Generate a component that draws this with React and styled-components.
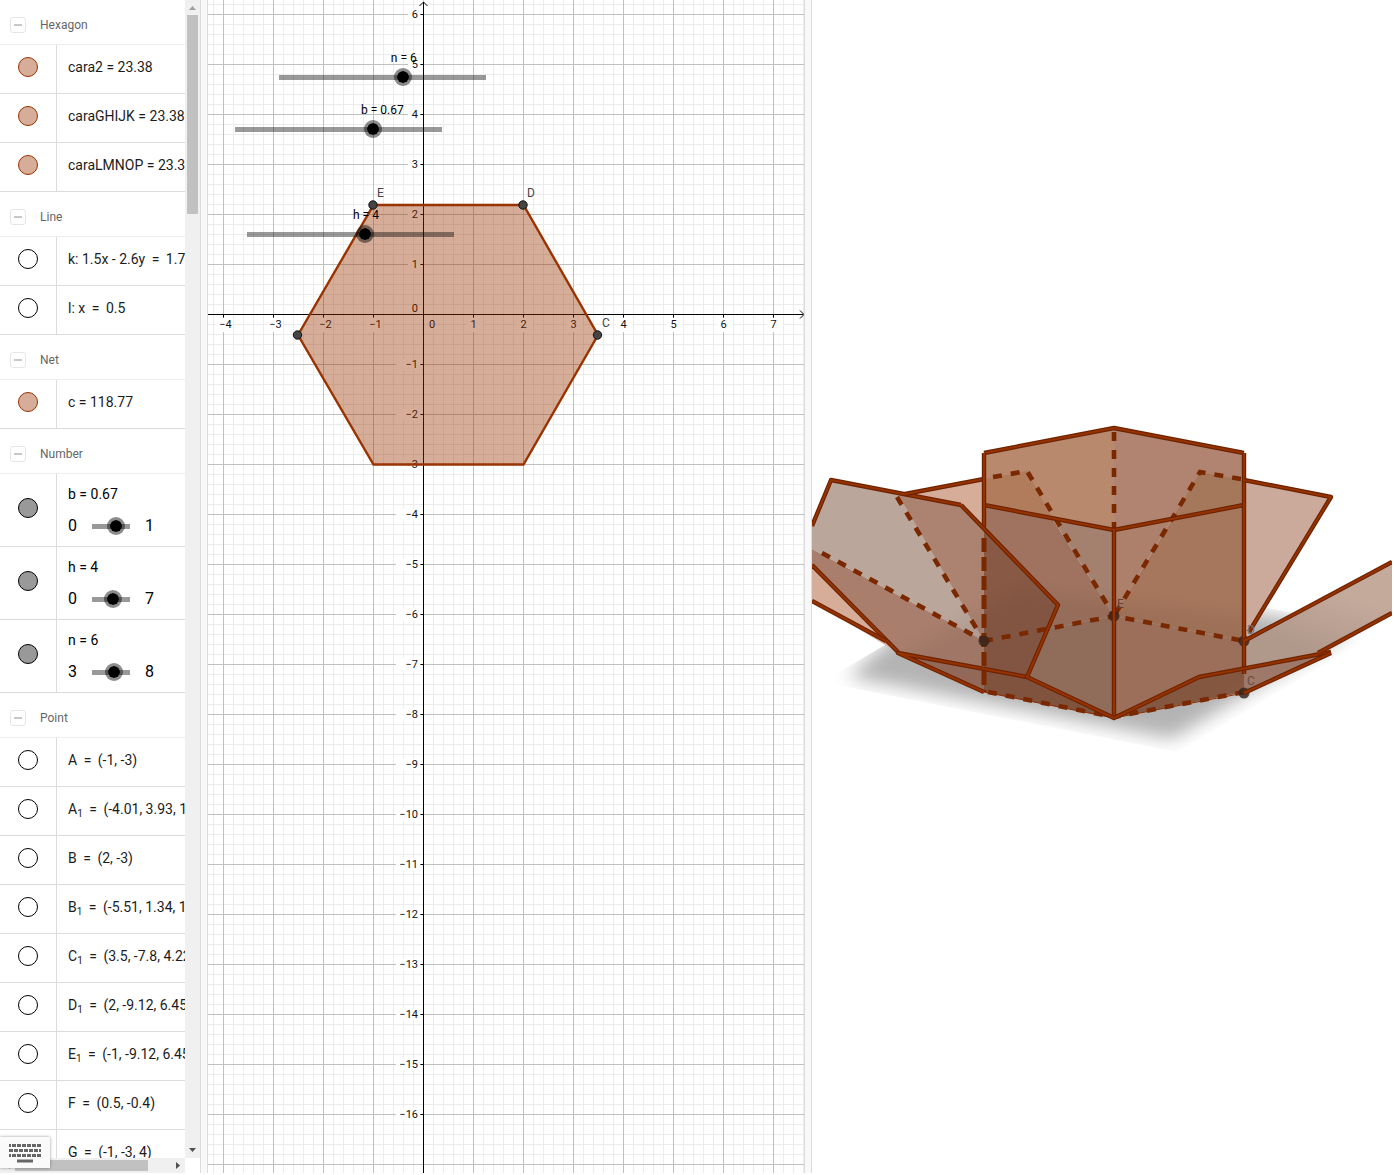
import { useState } from "react";
import styled, { createGlobalStyle } from "styled-components";

const GlobalStyle = createGlobalStyle`
   * {
      box-sizing: border-box;
   }

   body {
      margin: 0;
      background: #fff;
      font-family: Roboto, sans-serif;
      overflow: hidden;
   }

   button {
      padding: 0;
      border: none;
      background: none;
      cursor: pointer;
   }
`;

const Wrapper = styled.main`
   display: flex;
   height: 100vh;
   padding: 0 2px 2px 0;
`;

const Sidebar = styled.aside`
   position: relative;
   flex: none;
   display: grid;
   grid-template: minmax(0, 1fr) 15px / 185px 15px;
`;

const List = styled.div`
   overflow: hidden;
`;

const Splitter = styled.div`
   flex: none;
   width: 8px;
   background: #f8f8f8;
   border-left: 1px solid #dcdcdc;
   border-right: 1px solid #dcdcdc;
`;

const GroupTitle = styled.h2`
   display: flex;
   align-items: center;
   gap: 14px;
   height: 45px;
   margin: 0;
   padding: 5px 0 0 10px;
   border-bottom: 1px solid #eee;
   font-size: 12px;
   font-weight: 400;
   color: #666;
`;

const Toggle = styled.button`
   display: flex;
   align-items: center;
   justify-content: center;
   width: 16px;
   height: 16px;
   border: 1px solid #e6e6e6;
   border-radius: 3px;

   &::before {
      content: "";
      width: 8px;
      height: 2px;
      background: #c8c8c8;
   }
`;

const Items = styled.ul`
   margin: 0;
   padding: 0;
   list-style: none;
`;

const Item = styled.li`
   display: flex;
   height: ${({ $tall }) => ($tall ? "73px" : "49px")};
   border-bottom: 1px solid #dcdcdc;
`;

const MarbleCell = styled.div`
   flex: none;
   display: flex;
   justify-content: center;
   align-items: center;
   width: 57px;
   padding-bottom: 4px;
   border-right: 1px solid #dcdcdc;
`;

const Marble = styled.button`
   width: 20px;
   height: 20px;
   border: 1px solid ${({ $kind }) => ($kind === "face" ? "#993300" : "#000")};
   border-radius: 50%;
   background: ${({ $kind }) => ({ face: "#d6ad99", number: "#999" })[$kind] || "#fff"};
`;

const Value = styled.div`
   padding: 12px 0 0 11px;
   font-size: 14px;
   line-height: 20px;
   white-space: nowrap;
   color: #1c1c1c;

   & sub {
      font-size: 10px;
      line-height: 0;
      vertical-align: -3px;
   }
`;

const Equals = styled.span`
   margin: 0 ${({ $loose }) => ($loose ? "3px" : "0")};
`;

const NumberValue = styled.div`
   padding: 10px 0 0 11px;
   font-size: 14px;
   line-height: 20px;
   color: #000;
`;

const NumberSlider = styled.div`
   display: flex;
   align-items: center;
   height: 24px;
   margin-top: 10px;
   font-size: 16px;
`;

const Limit = styled.span`
   width: ${({ $min }) => ($min ? "19px" : "auto")};
   padding-left: ${({ $min }) => ($min ? "0" : "10px")};
`;

const Range = styled.input`
   appearance: none;
   width: ${({ $wide }) => ($wide ? "221px" : "48px")};
   height: 18px;
   margin: 0;
   background: linear-gradient(rgba(0, 0, 0, 0.4), rgba(0, 0, 0, 0.4)) no-repeat 50% 50% / calc(100% - ${({ $wide }) => ($wide ? "14px" : "10px")}) 5px;
   cursor: pointer;

   &::-webkit-slider-thumb {
      appearance: none;
      width: 18px;
      height: 18px;
      border: 3px solid rgba(0, 0, 0, 0.45);
      border-radius: 50%;
      background: #000;
      background-clip: padding-box;
   }
`;

const ScrollColumn = styled.div`
   display: flex;
   flex-direction: column;
   background: #f0f0f0;
`;

const ScrollRow = styled.div`
   display: flex;
   background: #f0f0f0;
`;

const ScrollButton = styled.button`
   flex: none;
   width: 15px;
   height: 15px;

   & > svg {
      display: block;
   }
`;

const Track = styled.div`
   flex: 1;
   display: flex;
   flex-direction: ${({ $vertical }) => ($vertical ? "column" : "row")};
   padding: ${({ $vertical }) => ($vertical ? "0 2px" : "2px 0")};
`;

const Thumb = styled.div`
   flex: 0 0 ${({ $size }) => $size};
   background: #c1c1c1;
`;

const KeyboardButton = styled.button`
   position: absolute;
   left: 0;
   bottom: 5px;
   display: flex;
   justify-content: center;
   align-items: center;
   width: 50px;
   height: 31px;
   background: #fafafa;
   box-shadow: 0 0 3px rgba(0, 0, 0, 0.4);
`;

const View = styled.section`
   position: relative;
   flex: ${({ $share }) => $share} 1 0;
   min-width: 0;
   overflow: hidden;
   background: #fff;
`;

const Layer = styled.svg`
   position: absolute;
   inset: 0;
   width: 100%;
   height: 100%;
   pointer-events: none;
   font-family: Roboto, sans-serif;
`;

const Scene = styled.svg`
   display: block;
   width: 100%;
   height: 100%;
   font-family: Roboto, sans-serif;
`;

const CanvasSlider = styled.div`
   position: absolute;
   left: ${({ $x }) => $x}px;
   top: ${({ $y }) => $y}px;
   display: flex;
   flex-direction: column;
   font-size: 12px;
   line-height: 14px;
`;

const CanvasLabel = styled.label`
   margin-bottom: 3px;
   white-space: nowrap;
`;

const GROUPS = [
   { title: "Hexagon", kind: "face", items: [["cara2", "23.38"], ["caraGHIJK", "23.38"], ["caraLMNOP", "23.38"]] },
   { title: "Line", kind: "line", items: [["k: 1.5x - 2.6y", "1.79"], ["l: x", "0.5"]] },
   { title: "Net", kind: "face", items: [["c", "118.77"]] },
   { title: "Number", kind: "number", items: ["b", "h", "n"] },
   {
      title: "Point",
      kind: "point",
      items: [
         ["A", "(-1, -3)"],
         ["A", "(-4.01, 3.93, 1.68)", 1],
         ["B", "(2, -3)"],
         ["B", "(-5.51, 1.34, 1.68)", 1],
         ["C", "(3.5, -7.8, 4.22)", 1],
         ["D", "(2, -9.12, 6.45)", 1],
         ["E", "(-1, -9.12, 6.45)", 1],
         ["F", "(0.5, -0.4)"],
         ["G", "(-1, -3, 4)"],
      ],
   },
];

const LIMITS = {
   n: { min: 3, max: 8, step: 1 },
   b: { min: 0, max: 1, step: 0.01 },
   h: { min: 0, max: 7, step: 0.1 },
};

const CANVAS_SLIDERS = [
   { name: "n", x: 64, y: 51 },
   { name: "b", x: 20, y: 103 },
   { name: "h", x: 32, y: 208 },
];

// graph origin inside the view and pixels per unit
const OX = 215.5;
const OY = 314.5;
const UNIT = 50;

const px = (x) => OX + x * UNIT;
const py = (y) => OY - y * UNIT;
const minus = (v) => String(v).replace("-", "−");

const HEXAGON = [[-1, 2.19], [2, 2.19], [3.49, -0.41], [2, -3], [-1, -3], [-2.51, -0.41]];
const X_TICKS = [-4, -3, -2, -1, 1, 2, 3, 4, 5, 6, 7];
const Y_TICKS = Array.from({ length: 22 }, (_, i) => 6 - i - (i > 5 ? 1 : 0));

const Arrow = ({ d, fill = "#505050" }) => (
   <svg width="15" height="15" viewBox="0 0 15 15"><path d={d} fill={fill}/></svg>
);

const Grid = () => (
   <Layer aria-hidden="true">
      <defs>
         <pattern id="minor" x="5" y="4" width="10" height="10" patternUnits="userSpaceOnUse">
            <path d="M.5 0V10M0 .5H10" stroke="#ececec"/>
         </pattern>
         <pattern id="major" x="15" y="14" width="50" height="50" patternUnits="userSpaceOnUse">
            <path d="M.5 0V50M0 .5H50" stroke="#c0c0c0"/>
         </pattern>
      </defs>
      <rect width="100%" height="100%" fill="url(#minor)"/>
      <rect width="100%" height="100%" fill="url(#major)"/>
      {X_TICKS.map((x) => (
         <rect key={x} x={px(x) - 7} y="318" width="16" height="14" fill="#fff"/>
      ))}
      {Y_TICKS.map((y) => {
         const width = y > 0 ? 12 : 24;
         return <rect key={y} x={212 - width} y={py(y) - 6} width={width} height="12" fill="#fff"/>;
      })}
      <path d={`M0 ${OY}H595M${OX} 1175V2`} stroke="#000"/>
      <path d="M592 310.500l4 4-4 4M211.500 6l4-4 4 4" stroke="#000" fill="none"/>
      {X_TICKS.map((x) => <path key={x} d={`M${px(x)} ${OY}v3`} stroke="#000"/>)}
      {Y_TICKS.map((y) => <path key={y} d={`M${OX} ${py(y)}h-3`} stroke="#000"/>)}
      <g fontSize="11" fill="#111">
         {X_TICKS.map((x) => (
            <text key={x} x={px(x) + (x < 0 ? 2 : 0)} y="328" textAnchor="middle">{minus(x)}</text>
         ))}
         <text x="224" y="328" textAnchor="middle">0</text>
         <text x="210" y="312" textAnchor="end">0</text>
         {Y_TICKS.map((y) => (
            <text key={y} x="210" y={Math.floor(py(y)) + 4} textAnchor="end">{minus(y)}</text>
         ))}
      </g>
   </Layer>
);

const Polygon = () => (
   <Layer aria-hidden="true">
      <polygon
         points={HEXAGON.map(([x, y]) => `${px(x)},${py(y)}`).join(" ")}
         fill="#993300"
         fillOpacity=".4"
         stroke="#993300"
         strokeWidth="2.400"
      />
      {[0, 1, 2, 5].map((i) => (
         <circle key={i} cx={px(HEXAGON[i][0]) - 0.5} cy={py(HEXAGON[i][1])} r="4.200" fill="#444" stroke="#111"/>
      ))}
      <g fontSize="12" fill="#444">
         <text x="169" y="197">E</text>
         <text x="319" y="197">D</text>
         <text x="394" y="327">C</text>
      </g>
   </Layer>
);

const FACES = [
   // flaps on the left
   ["812,526 831,480 900,493 984,641 812,549", "#bba69b"],
   ["898,494 961,505 984,527 984,641", "#ac8371"],
   ["905,494 984,479 984,527 961,505", "#d6ad99"],
   ["812,549 984,641 984,668 897,653 812,566", "#a97e6c"],
   ["812,566 897,652 812,601", "#d6ad99"],
   ["897,653 984,668 984,692", "#9a6e5d"],
   // inner walls
   ["984,453 1114,428 1114,530 984,505", "#b8896d"],
   ["984,479 1027,471 1052,518 984,505", "#b07c5b"],
   ["1114,428 1244,453 1244,505 1114,530", "#b08470"],
   ["1200,472 1244,480 1244,505 1172,519", "#a6785b"],
   // outer walls
   ["984,505 1052,518 1114,616 984,641", "#9f735f"],
   ["1052,518 1114,530 1114,616", "#a4806e"],
   ["984,641 1114,616 1114,718 984,692", "#98735f"],
   ["984,527 1058,605 1027,676 984,668", "#885a45"],
   ["984,668 1027,676 1114,718 984,692", "#875843"],
   ["1114,530 1172,519 1114,616", "#ad806b"],
   ["1172,519 1244,505 1244,641 1114,616", "#a6765d"],
   ["1114,616 1244,641 1244,692 1114,718", "#a5755f"],
   ["1114,718 1199,677 1244,668 1244,692", "#8c5c45"],
   // flaps on the right
   ["1244,480 1331,497 1249,632 1244,641", "#cbaa9b"],
   ["1244,641 1392,562 1392,613 1318,653 1244,668", "url(#flap)"],
   ["1244,668 1331,653 1244,692", "#9e7868"],
];

const SOLID = [
   "M812 526L831 480L961 505",
   "M905 494L984 479",
   "M812 565L898 652",
   "M812 601L886 641",
   "M984 692L898 653L1027 677",
   "M984 453L1114 428L1244 453",
   "M984 505L1114 530L1244 505",
   "M984 453V527",
   "M1114 530V718",
   "M1244 453V674",
   "M961 505L1058 605L1027 677L1114 718L1199 677L1331 652",
   "M1244 480L1331 497L1249 632",
   "M1244 641L1392 562",
   "M1318 653L1392 613",
   "M1331 653L1244 693",
];

const DASHED = [
   "M822 553L984 641",
   "M897 497L984 641",
   "M993 477L1027 471L1114 616",
   "M1241 479L1200 472L1114 616",
   "M984 641L1114 616L1244 641",
   "M1114 432V530",
   "M988 692L1114 717L1244 692",
];

const VERTICES = [[984, 641], [1114, 616], [1244, 641], [1244, 693]];

const Box = () => (
   <Scene viewBox="812 0 580 1173" preserveAspectRatio="xMidYMid slice" role="img" aria-label="Unfolding prism">
      <defs>
         <filter id="soft" x="-10%" y="-30%" width="120%" height="160%">
            <feGaussianBlur stdDeviation="9"/>
         </filter>
         <clipPath id="ground">
            <polygon points="822,682 890,642 1000,570 1050,566 1382,630 1177,752"/>
         </clipPath>
         <clipPath id="walls">
            <polygon points="860,641 984,570 1040,560 1244,595 1244,692 1114,718 984,692 898,653"/>
         </clipPath>
         <linearGradient id="flap" x1="1330" y1="590" x2="1310" y2="650" gradientUnits="userSpaceOnUse">
            <stop stopColor="#c4aa9b"/>
            <stop offset="1" stopColor="#b0988b"/>
         </linearGradient>
      </defs>
      <g clipPath="url(#ground)">
         <polygon points="848,677 890,640 1020,570 1354,630 1172,739" fill="#b4b4b4" filter="url(#soft)"/>
      </g>
      {FACES.map(([points, fill]) => <polygon key={points} points={points} fill={fill}/>)}
      <g clipPath="url(#walls)" opacity=".05">
         <polygon points="858,678 1020,590 1340,631 1170,736" filter="url(#soft)"/>
      </g>
      <path d="M984 692L1114 718L1244 693" fill="none" stroke="#8b2e00"/>
      <g fill="none" stroke="#7a2800" strokeWidth="4.600" strokeDasharray="9 9">
         {DASHED.map((d) => <path key={d} d={d}/>)}
         <path d="M984 538V692" strokeWidth="5" strokeDasharray="14 5"/>
      </g>
      <g fill="#38261f" fillOpacity=".85">
         {VERTICES.map(([x, y]) => <circle key={`${x}-${y}`} cx={x} cy={y} r="5.500"/>)}
      </g>
      <g fill="none" strokeLinejoin="round">
         {SOLID.map((d) => (
            <g key={d}>
               <path d={d} stroke="#6e2300" strokeWidth="4.400"/>
               <path d={d} stroke="#953200" strokeWidth="2"/>
            </g>
         ))}
      </g>
      <g fontSize="12">
         <text x="1117" y="608" fill="#65402f">E</text>
         <text x="1247" y="634" fill="#777">D</text>
         <text x="1247" y="685" fill="#6b4c40">C</text>
      </g>
   </Scene>
);

const KeyboardIcon = () => (
   <svg width="32" height="20" viewBox="0 0 32 20" fill="none" stroke="#666" strokeWidth="3">
      <path d="M0 2.500H32M0 12.500H32" strokeDasharray="2 1 4 1 4 1 4 1 4 1 4 1 4"/>
      <path d="M0 7.500H32" strokeDasharray="4 1"/>
      <path d="M8 18H24"/>
   </svg>
);

const App = () => {
   const [values, setValues] = useState({ n: 6, b: 0.67, h: 4 });

   const handleChange = (name) => (e) => {
      setValues({ ...values, [name]: Number(e.target.value) });
   }

   const renderItem = (item, kind) => {
      if (kind === "number") {
         const { min, max, step } = LIMITS[item];
         return (
            <Item key={item} $tall>
               <MarbleCell><Marble $kind={kind} aria-label={`Show ${item}`}/></MarbleCell>
               <NumberValue>
                  <label htmlFor={`value-${item}`}>{item} = {values[item]}</label>
                  <NumberSlider>
                     <Limit $min>{min}</Limit>
                     <Range
                        id={`value-${item}`}
                        type="range"
                        min={min}
                        max={max}
                        step={step}
                        value={values[item]}
                        onChange={handleChange(item)}
                     />
                     <Limit>{max}</Limit>
                  </NumberSlider>
               </NumberValue>
            </Item>
         )
      }

      const [name, value, index] = item;
      return (
         <Item key={name + value}>
            <MarbleCell><Marble $kind={kind} aria-label={`Show ${name}`}/></MarbleCell>
            <Value>
               {name}{index && <sub>{index}</sub>} <Equals $loose={kind !== "face"}>=</Equals> {value}
            </Value>
         </Item>
      )
   }

   return (
      <Wrapper>
         <GlobalStyle/>
         <Sidebar>
            <List>
               {GROUPS.map(({ title, kind, items }) => (
                  <section key={title}>
                     <GroupTitle><Toggle aria-label={`Collapse ${title}`}/>{title}</GroupTitle>
                     <Items>{items.map((item) => renderItem(item, kind))}</Items>
                  </section>
               ))}
            </List>
            <ScrollColumn>
               <ScrollButton aria-label="Scroll up"><Arrow d="M4 10L7.500 6L11 10Z" fill="#a0a0a0"/></ScrollButton>
               <Track $vertical><Thumb $size="17.6%"/></Track>
               <ScrollButton aria-label="Scroll down"><Arrow d="M4 5L7.500 9L11 5Z"/></ScrollButton>
            </ScrollColumn>
            <ScrollRow>
               <ScrollButton aria-label="Scroll left"><Arrow d="M10 4L6 7.500L10 11Z" fill="#a0a0a0"/></ScrollButton>
               <Track><Thumb $size="86%"/></Track>
               <ScrollButton aria-label="Scroll right"><Arrow d="M6 4L10 7.500L6 11Z"/></ScrollButton>
            </ScrollRow>
            <KeyboardButton aria-label="Open keyboard"><KeyboardIcon/></KeyboardButton>
         </Sidebar>
         <Splitter/>
         <View $share={596}>
            <Grid/>
            <Polygon/>
            {CANVAS_SLIDERS.map(({ name, x, y }) => {
               const { min, max, step } = LIMITS[name];
               return (
                  <CanvasSlider key={name} $x={x} $y={y}>
                     <CanvasLabel
                        htmlFor={`canvas-${name}`}
                        style={{ paddingLeft: -3 + 203 * (values[name] - min) / (max - min) }}
                     >
                        {name} = {values[name]}
                     </CanvasLabel>
                     <Range
                        $wide
                        id={`canvas-${name}`}
                        type="range"
                        min={min}
                        max={max}
                        step={step}
                        value={values[name]}
                        onChange={handleChange(name)}
                     />
                  </CanvasSlider>
               )
            })}
         </View>
         <Splitter/>
         <View $share={580}>
            <Box/>
         </View>
      </Wrapper>
   )
}

export default App;
